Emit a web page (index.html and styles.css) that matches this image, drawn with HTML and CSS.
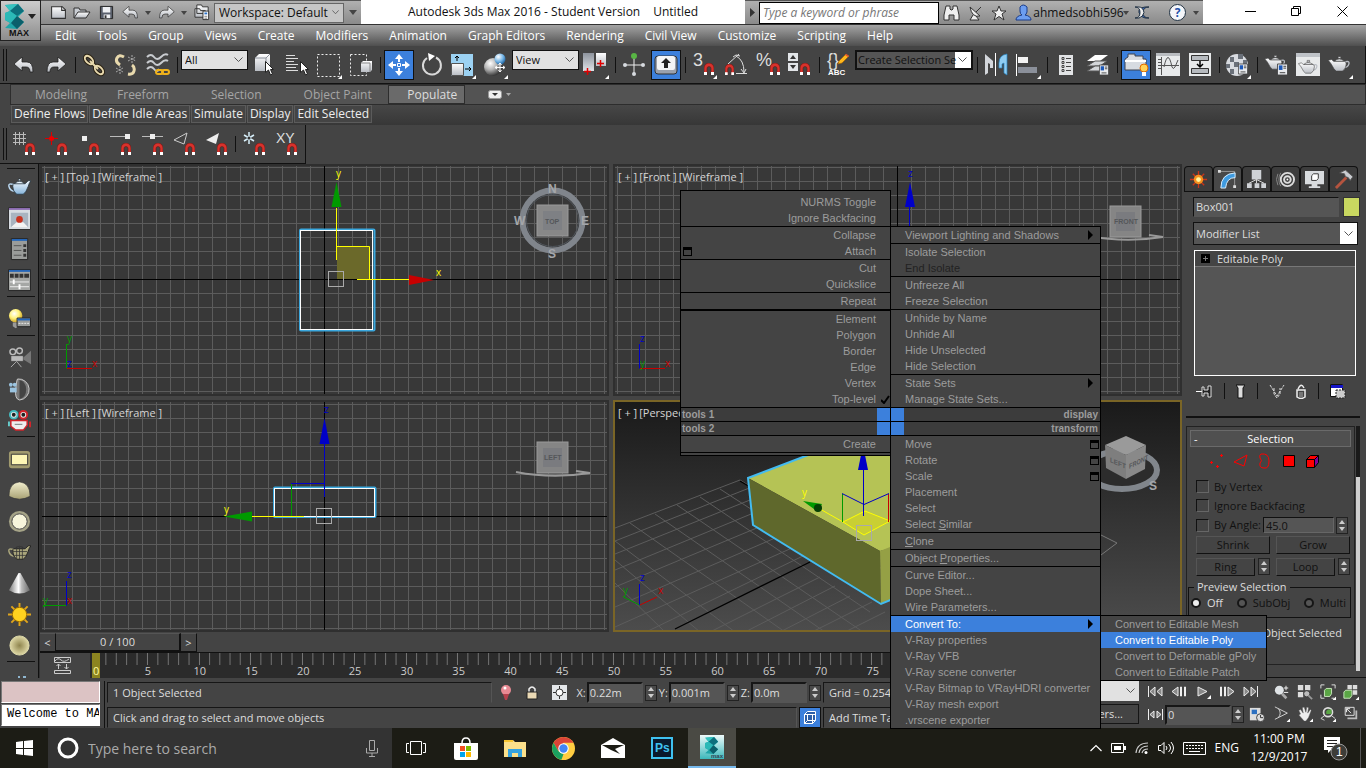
FILE: index.html
```html
<!DOCTYPE html>
<html lang="en">
<head>
<meta charset="utf-8">
<title>Autodesk 3ds Max 2016 - Student Version Untitled</title>
<link rel="stylesheet" href="styles.css">
</head>
<body>
<svg class="sprite" aria-hidden="true">
<defs>
<linearGradient id="gw" x1="0" y1="0" x2="0" y2="1"><stop offset="0" stop-color="#fff"/><stop offset="1" stop-color="#b9bdc4"/></linearGradient>
<linearGradient id="gs" x1="0" y1="0" x2="0" y2="1"><stop offset="0" stop-color="#8e949e"/><stop offset="1" stop-color="#dfe2e6"/></linearGradient>
<radialGradient id="gball" cx=".35" cy=".3" r=".7"><stop offset="0" stop-color="#fff"/><stop offset=".5" stop-color="#b5b5b5"/><stop offset="1" stop-color="#3a3a3a"/></radialGradient>
<radialGradient id="gblue" cx=".35" cy=".3" r=".7"><stop offset="0" stop-color="#fff"/><stop offset=".6" stop-color="#79b8e8"/><stop offset="1" stop-color="#2a6ea8"/></radialGradient>
<radialGradient id="gyel" cx=".4" cy=".35" r=".7"><stop offset="0" stop-color="#fff"/><stop offset=".5" stop-color="#fff27a"/><stop offset="1" stop-color="#c99a1b"/></radialGradient>
<radialGradient id="gcream" cx=".5" cy=".5" r=".6"><stop offset="0" stop-color="#8f854e"/><stop offset="1" stop-color="#efe9b8"/></radialGradient>
<linearGradient id="gdome" x1="0" y1="0" x2="0" y2="1"><stop offset="0" stop-color="#f3efcf"/><stop offset="1" stop-color="#a8a274"/></linearGradient>
<linearGradient id="gcone" x1="0" y1="0" x2="1" y2="0"><stop offset="0" stop-color="#777"/><stop offset=".45" stop-color="#fff"/><stop offset=".6" stop-color="#bbb"/><stop offset="1" stop-color="#666"/></linearGradient>
<linearGradient id="gpersp" x1="0" y1="0" x2="0" y2="1"><stop offset="0" stop-color="#1a1a1a"/><stop offset="1" stop-color="#4c4c4c"/></linearGradient>
<linearGradient id="gteal" x1="0" y1="0" x2="0" y2="1"><stop offset="0" stop-color="#eefafa"/><stop offset="1" stop-color="#3cb8bb"/></linearGradient>
<linearGradient id="gpot" x1="0" y1="0" x2="0" y2="1"><stop offset="0" stop-color="#f2f9ff"/><stop offset="1" stop-color="#86b4da"/></linearGradient>
<pattern id="gridTop" width="14" height="14" x="324" y="279" patternUnits="userSpaceOnUse"><path d="M0 .5H14M.5 0V14" stroke="#5c5c5c"/></pattern>
<pattern id="gridFront" width="14" height="14" x="897" y="279" patternUnits="userSpaceOnUse"><path d="M0 .5H14M.5 0V14" stroke="#5c5c5c"/></pattern>
<pattern id="gridLeft" width="14" height="14" x="324" y="516" patternUnits="userSpaceOnUse"><path d="M0 .5H14M.5 0V14" stroke="#5c5c5c"/></pattern>
</defs>
<symbol id="mag" viewBox="0 0 10 12"><path d="M0 12V5a5 5 0 0 1 10 0v7H7V5.500a2 2 0 0 0-4 0V12z" fill="#d8322c" stroke="#6d1512" stroke-width=".6"/><path d="M0 9h3v3H0zM7 9h3v3H7z" fill="#fff"/></symbol>
<symbol id="maxlogo" viewBox="0 0 20 25"><path d="M0 1 13 0l6 7-6 6 6 5-7 7-12-1 5-5-5-3V9l5-2z" fill="#1fa5a8"/><path d="M0 1 13 0 5 7z" fill="#35c3c0"/><path d="m13 0 6 7-7 5-7-5z" fill="#0d6f7c"/><path d="m0 9 5-2 7 5-6 7-6-3z" fill="#2bb9b7"/><path d="m6 19 6-7 7 6-7 7z" fill="#0b5f6b"/></symbol>
<symbol id="new" viewBox="0 0 16 16"><path d="M1.500 2.500h10l3 3v8h-13z" fill="url(#gw)" stroke="#333"/><path d="M11 2v4h4" fill="none" stroke="#333"/></symbol>
<symbol id="open" viewBox="0 0 18 16"><path d="M1 13V3h5l1 2h6v2" fill="#c9cdd3" stroke="#333"/><path d="m1 13 4-6h12l-4 6z" fill="url(#gw)" stroke="#333"/></symbol>
<symbol id="save" viewBox="0 0 16 16"><path d="M1.500 1.500h13v13h-13z" fill="#5a606c" stroke="#222"/><path d="M4 2h8v6H4zM5 10h7v4H5z" fill="#eef0f3"/><path d="M6 11h2v3H6z" fill="#333"/></symbol>
<symbol id="undo" viewBox="0 0 22 18"><path d="M9 1v5h5q6 0 6 10h-3q0-5-4-5H9v4L1 8z" fill="url(#gw)" stroke="#222" stroke-width=".8"/></symbol>
<symbol id="redo" viewBox="0 0 22 18"><path d="M13 1v5H8q-6 0-6 10h3q0-5 4-5h4v4l8-7z" fill="url(#gw)" stroke="#222" stroke-width=".8"/></symbol>
<symbol id="proj" viewBox="0 0 18 18"><path d="M3 1h5l1 2h6v7H3zM1 5h5l1 2h5v7H1z" fill="url(#gw)" stroke="#333"/><path d="M9.500 7.500h6v9h-6z" fill="#fff" stroke="#333"/><path d="M11 9h3v2h-3z" fill="#2f74c8"/><path d="M11 13h3m-3 2h3" stroke="#777"/></symbol>
<symbol id="link" viewBox="0 0 24 24"><g fill="none" stroke="#2c2416" stroke-width="4"><ellipse cx="7" cy="7" rx="3" ry="5" transform="rotate(-45 7 7)"/><ellipse cx="17" cy="17" rx="3" ry="5" transform="rotate(-45 17 17)"/><path d="m8 8 8 8"/></g><g fill="none" stroke="#e8d9ad" stroke-width="2"><ellipse cx="7" cy="7" rx="3" ry="5" transform="rotate(-45 7 7)"/><ellipse cx="17" cy="17" rx="3" ry="5" transform="rotate(-45 17 17)"/><path d="m8 8 8 8"/></g></symbol>
<symbol id="unlink" viewBox="0 0 24 24"><path d="M10 4Q5 1 3 5t3 7M14 21q5 1 6-3t-2-6" fill="none" stroke="#e8d9ad" stroke-width="3"/><path d="m14 4 8 4m-8 0 8-4m-4-2v8M2 15l7 4m-7 0 7-4m-3-2v8" stroke="#aaa" stroke-dasharray="2 1"/></symbol>
<symbol id="bind" viewBox="0 0 24 24"><path d="M1 4q4-4 7 0t7 0 7-2M1 10q4-4 7 0t7 0 7-2M1 16q4-4 7 0t5 0" fill="none" stroke="#c9ccd0" stroke-width="2"/><rect x="10" y="17" width="7" height="4" rx="2" fill="none" stroke="#f0b21b" stroke-width="2"/><rect x="16" y="17" width="7" height="4" rx="2" fill="none" stroke="#f0b21b" stroke-width="2"/></symbol>
<symbol id="cursor" viewBox="0 0 9 15"><path d="M.5.5v11l3-2.500 2 5 2-1-2-4.500h3z" fill="#fff" stroke="#222"/></symbol>
<symbol id="selobj" viewBox="0 0 24 24"><path d="m2 5 4-4h11v12l-4 5H2z" fill="url(#gw)"/><path d="M2 5h11v13M13 5l4-4" stroke="#8a909a" fill="none"/><use href="#cursor" x="12" y="8" width="9" height="15"/></symbol>
<symbol id="selname" viewBox="0 0 24 24"><path d="M1 2.500h9m-9 3h12m-12 3h8m-8 3h12m-12 3h10m-10 3h12" stroke="#ddd"/><use href="#cursor" x="15" y="8" width="9" height="15"/></symbol>
<symbol id="fly" viewBox="0 0 5 5"><path d="M5 0v5H0z" fill="#fff"/></symbol>
<symbol id="region" viewBox="0 0 26 26"><path d="M1.500 1.500h22v22h-22z" fill="none" stroke="#eee" stroke-dasharray="2 2"/><use href="#fly" x="22" y="22" width="4" height="4"/></symbol>
<symbol id="cross" viewBox="0 0 24 24"><path d="M1.500 1.500h16v21h-16z" fill="none" stroke="#eee" stroke-dasharray="2 2"/><path d="m12 10 2-2h9v9l-2 2h-9z" fill="url(#gw)"/><path d="M12 10h9v9" fill="none" stroke="#888"/></symbol>
<symbol id="move" viewBox="0 0 24 24"><path d="m12 1 4 5h-3v3h-2V6H8zM12 23l4-5h-3v-3h-2v3H8zM1 12l5-4v3h3v2H6v3zM23 12l-5-4v3h-3v2h3v3z" fill="#fff"/><path d="M10.500 10.500h3v3h-3z" fill="none" stroke="#fff"/></symbol>
<symbol id="rotate" viewBox="0 0 24 24"><path d="M8 5a9 9 0 1 0 9-.5" fill="none" stroke="#d9d9d9" stroke-width="2"/><path d="m9 0 7 3-6 5z" fill="#fff"/></symbol>
<symbol id="scale" viewBox="0 0 26 26"><path d="M1 1h22v22H1z" fill="#9cd2f3"/><path d="M1.500 10.500h12v12h-12z" fill="url(#gw)" stroke="#555"/><path d="M7 8V3M5 5l2-2 2 2M15 16h6m-2-2 2 2-2 2" stroke="#000" fill="none"/><use href="#fly" x="22" y="22" width="4" height="4"/></symbol>
<symbol id="place" viewBox="0 0 26 26"><circle cx="11" cy="14" r="9" fill="url(#gball)"/><circle cx="18" cy="6" r="5.500" fill="url(#gblue)"/><path d="M18 10v9m-4.500-4.500h9M16.500 12l1.500-2 1.500 2m-3 5 1.500 2 1.500-2M15 13l-2 1.500 2 1.500m6-3 2 1.500-2 1.500" stroke="#fff" fill="none"/><use href="#fly" x="22" y="22" width="4" height="4"/></symbol>
<symbol id="pivot" viewBox="0 0 26 26"><path d="M0 0h11v18H0z" fill="url(#gs)"/><path d="M13 0h10v13H13z" fill="url(#gw)"/><path d="M4.500 15v7M1 18.500h7M17.500 7v7M14 10.500h7" stroke="#e00000" stroke-width="1.500"/><use href="#fly" x="22" y="22" width="4" height="4"/></symbol>
<symbol id="manip" viewBox="0 0 24 24"><path d="M12 3v17M2 12h20" stroke="#eee"/><circle cx="12" cy="3" r="3" fill="#58b544"/><circle cx="12" cy="21" r="2" fill="#d7dbe0"/><circle cx="3" cy="12" r="2" fill="#d7dbe0"/><circle cx="21" cy="12" r="2" fill="#d7dbe0"/></symbol>
<symbol id="kbd" viewBox="0 0 24 24"><rect x="1" y="3" width="22" height="18" rx="3" fill="#9aa1ad" stroke="#333"/><rect x="3" y="3" width="18" height="14" rx="2" fill="#f4f5f6"/><path d="m12 5 5 5h-3v5h-4v-5H7z" fill="#222"/></symbol>
<symbol id="angle" viewBox="0 0 24 24"><path d="M12 20.500h11M4 11 15 1m-3 2q8 4 8 16M17 16l3 4 2-4M9 4l3-2 4 1" stroke="#ddd" fill="none"/><use href="#mag" x="1" y="11" width="9" height="11"/></symbol>
<symbol id="spin" viewBox="0 0 24 24"><path d="M0 0h10v8H0zM0 10h10v8H0z" fill="#e2e5e8"/><path d="m2 6 3-4 3 4zM2 12l3 4 3-4z" fill="#333"/><use href="#mag" x="12" y="10" width="10" height="12"/></symbol>
<symbol id="pencil" viewBox="0 0 12 12"><path d="m2 8 7-7 3 2-7 7-4 1z" fill="#ffb81c" stroke="#a35c00" stroke-width=".6"/><path d="m9 1 3 2-1 1-3-2z" fill="#e04a3a"/></symbol>
<symbol id="mirror" viewBox="0 0 24 24"><path d="m1 1 8 7v7H6v-4l-2-1v10l-3 2z" fill="#d3d6db"/><path d="M23 1q-8 1-8 9v5h3v-4l2-1v10l3 2z" fill="#8fcdf3" stroke="#2a86c4" stroke-width=".7"/><path d="M11.500 0v23" stroke="#fff"/></symbol>
<symbol id="align" viewBox="0 0 26 26"><path d="M1.500 1v22" stroke="#fff"/><path d="M3 4h10v6H3z" fill="#f3f3f3"/><path d="M3 14h19v6H3z" fill="#8b909a"/><use href="#fly" x="22" y="22" width="4" height="4"/></symbol>
<symbol id="scene" viewBox="0 0 24 24"><path d="M5 2h14v20H5z" fill="#e2e4e6"/><g stroke="#444"><path d="M12 5.500h5m-5 4h5m-5 4h5m-5 4h5"/><path d="M8 4.500h2v2H8zm0 4h2v2H8zm0 4h2v2H8zm0 4h2v2H8z" fill="none"/></g></symbol>
<symbol id="card" viewBox="0 0 12 13"><path d="M.5.500h11v12H.5z" fill="#e9ebee" stroke="#444"/><path d="M2 2h4v5H2z" fill="#1c58b8"/><path d="M7 3h3M7 5h3M3 10h6" stroke="#333"/></symbol>
<symbol id="layers" viewBox="0 0 24 24"><path d="m1 8 8-6h13l-8 6z" fill="#fff"/><path d="m1 13 8-5h12l-7 5z" fill="#d3d6d9" stroke="#555"/><path d="m1 18 8-5h11l-6 5z" fill="#d3d6d9" stroke="#555"/><use href="#card" x="13" y="11" width="10" height="12"/></symbol>
<symbol id="rib" viewBox="0 0 26 26"><path d="M5 4V1h7v2h8v3h3v11H2V6z" fill="#d7dbe1" stroke="#3c4350"/><path d="M2 8h21" stroke="#fff" stroke-width="2"/><circle cx="21" cy="15" r="4" fill="#ffd257" stroke="#e06a00"/><path d="M19 19h4v4h-4z" fill="#fff"/></symbol>
<symbol id="curve" viewBox="0 0 24 24"><path d="M0 0h24v23H0z" fill="#e8eaeb"/><path d="M0 0h24v3H0z" fill="#b9bcc0"/><path d="M5.500 4v18M2 6.500h3m-3 3h3m-3 3h3m-3 3h3M6 12.500h17M8 14q4-19 8 0 1 3 3 0l3-7" stroke="#555" fill="none"/></symbol>
<symbol id="schem" viewBox="0 0 24 24"><path d="M1 0h22v23H1z" fill="#e8eaeb"/><path d="M3.500 2.500h17v5h-17zM3.500 15.500h17v5h-17z" fill="#b6babf" stroke="#333"/><path d="M12 8v6m-3-3 3 3 3-3" stroke="#000" fill="none" stroke-width="1.500"/></symbol>
<symbol id="mat" viewBox="0 0 26 26"><circle cx="12" cy="12" r="11" fill="#d8dbe0"/><path d="M5 4h4v5H5zM13 1h5v5h-5zM9 9h5v5H9zM1 11h4v4H1zM18 7h4v4h-4zM5 16h4v5H5z" fill="#6a7079"/><use href="#card" x="13" y="10" width="10" height="12"/><use href="#fly" x="22" y="22" width="4" height="4"/></symbol>
<symbol id="pot" viewBox="0 0 24 20"><path d="M18 9q6-2 5 2-1 4-5 4" fill="none" stroke="#b9bdc4" stroke-width="1.500"/><path d="M7 8h11q2 0 2 3 0 5-4 8H9q-3-2-4-5Q3 10 0 7l4-1q2 3 3 2z" fill="url(#gw)" stroke="#444" stroke-width=".7"/><path d="M7 8q5-5 11 0zM11 3h3v2h-3z" fill="#e6e8eb" stroke="#444" stroke-width=".7"/></symbol>
<symbol id="rset" viewBox="0 0 24 24"><use href="#pot" x="0" y="0" width="22" height="17"/><use href="#card" x="13" y="10" width="11" height="13"/></symbol>
<symbol id="rframe" viewBox="0 0 24 24"><path d="M0 0h24v23H0z" fill="#e8eaeb"/><path d="M0 0h24v4H0z" fill="#bfc3c8"/><use href="#pot" x="2" y="5" width="20" height="16"/></symbol>
<symbol id="rprod" viewBox="0 0 26 26"><use href="#pot" x="1" y="1" width="22" height="18"/><use href="#fly" x="22" y="22" width="4" height="4"/></symbol>
<symbol id="s1" viewBox="0 0 24 24"><path d="M1 2.500h13m-13 4h13m-13 4h13M3.500 0v13M7.500 0v13M11.500 0v13" stroke="#bbb"/><use href="#mag" x="13" y="11" width="10" height="12"/></symbol>
<symbol id="s2" viewBox="0 0 24 24"><path d="M7.500 0v13M1 6.500h13" stroke="#d00"/><circle cx="7.500" cy="6.500" r="2.500" fill="#e00"/><use href="#mag" x="13" y="11" width="10" height="12"/></symbol>
<symbol id="s3" viewBox="0 0 24 24"><path d="M6 4h5v5H6z" fill="#eee"/><use href="#mag" x="13" y="11" width="10" height="12"/></symbol>
<symbol id="s4" viewBox="0 0 24 24"><path d="M2 4.500h17" stroke="#bbb"/><path d="M17 2h5v5h-5z" fill="#eee"/><use href="#mag" x="13" y="11" width="10" height="12"/></symbol>
<symbol id="s5" viewBox="0 0 24 24"><path d="M2 4.500h21" stroke="#bbb"/><path d="M10 2h5v5h-5z" fill="#eee"/><use href="#mag" x="13" y="11" width="10" height="12"/></symbol>
<symbol id="s6" viewBox="0 0 24 24"><path d="M15 1 2 8l10 4z" fill="none" stroke="#ccc"/><use href="#mag" x="13" y="11" width="10" height="12"/></symbol>
<symbol id="s7" viewBox="0 0 24 24"><path d="M15 1 2 8l10 4z" fill="#eee"/><use href="#mag" x="13" y="11" width="10" height="12"/></symbol>
<symbol id="s8" viewBox="0 0 24 24"><path d="M7 0v12M2 3l10 6M12 3 2 9" stroke="#d7effa" stroke-width="1.500"/><circle cx="7" cy="6" r="1.500" fill="#333"/><use href="#mag" x="13" y="11" width="10" height="12"/></symbol>
<symbol id="bpot" viewBox="0 0 24 24"><path d="M6 9q-6-2-5 2 1 4 5 5" fill="none" stroke="#b9d7f0" stroke-width="1.500"/><path d="M6 8h12l3-3 3 0q-2 2-3 6-2 6-5 8H9q-4-3-4-8 0-3 1-3z" fill="url(#gpot)" stroke="#23333f" stroke-width=".8"/><path d="M7 8q5-5 10 0zM11 3h2v2h-2z" fill="#e9f4fc" stroke="#23333f" stroke-width=".6"/></symbol>
<symbol id="vfb" viewBox="0 0 24 24"><path d="M.5.500h23v23H.5z" fill="#d8dde2" stroke="#2a2a2a"/><path d="M1 1h22v2H1z" fill="#8b6bb0"/><path d="M3 6h18v15H3z" fill="#a9b4c0"/><path d="m3 21 6-5h7l5 5z" fill="#f3f3f3"/><circle cx="12" cy="13" r="3.500" fill="#c9331f"/></symbol>
<symbol id="list" viewBox="0 0 24 24"><path d="M3.500.500h17v22h-17z" fill="#9a9c9a" stroke="#222"/><path d="M4 1h16v2H4z" fill="#2566b8"/><path d="M6 8h8m-8 5h8m-8 5h8" stroke="#555"/><path d="M16 8h3m-3 5h3m-3 5h3" stroke="#333" stroke-width="3"/></symbol>
<symbol id="mixer" viewBox="0 0 24 24"><path d="M.5.500h23v22H.5z" fill="#a5a7a5" stroke="#222"/><path d="M1 1h22v2H1z" fill="#2566b8"/><path d="M2 5h4v4H2zm5 0h4v4H7zm5 0h4v4h-4zm5 0h5v4h-5z" fill="#333"/><path d="M2 13.500h20m-20 5h20" stroke="#eee"/><path d="M6 11v5m6 0v5" stroke="#fff" stroke-width="2"/></symbol>
<symbol id="bulb" viewBox="0 0 24 24"><circle cx="8" cy="8" r="7" fill="url(#gyel)"/><path d="M5 15h6v4l-3 2-3-2z" fill="#999"/><path d="M9.500 10.500h14v9h-14z" fill="#9a9c9a" stroke="#222"/><path d="M10 11h13v2H10z" fill="#2566b8"/><path d="M11 16h11" stroke="#eee" stroke-dasharray="2 1"/></symbol>
<symbol id="cam" viewBox="0 0 24 24"><circle cx="5" cy="5" r="3" fill="none" stroke="#bbb" stroke-width="1.500"/><circle cx="12" cy="4" r="3" fill="none" stroke="#bbb" stroke-width="1.500"/><path d="M3 9h13v6H3z" fill="#bbb" stroke="#333" stroke-width=".6"/><path d="m16 11 8-7v14l-8-5z" fill="#777"/><path d="m9 15-6 6m6-6 5 6" stroke="#aaa"/></symbol>
<symbol id="domecam" viewBox="0 0 24 24"><path d="M10 1a11 11 0 1 1 2 22q-5-1-4-11T10 1z" fill="#777" stroke="#ccc"/><path d="M12 2q7 2 7 10t-7 10z" fill="#444"/><circle cx="3" cy="7" r="2" fill="#9bc4e0"/><circle cx="7" cy="7" r="2" fill="#9bc4e0"/><path d="M2 10h7v5H2z" fill="#9bc4e0"/></symbol>
<symbol id="redcam" viewBox="0 0 24 24"><circle cx="6" cy="6" r="4" fill="#e8e8e8" stroke="#43b8bd" stroke-width="2"/><circle cx="16" cy="6" r="4" fill="#e8e8e8" stroke="#d2232a" stroke-width="2"/><circle cx="6" cy="6" r="2" fill="#222"/><circle cx="16" cy="6" r="2" fill="#222"/><path d="M3 12h17v5l-4 5H8l-5-4z" fill="#eee" stroke="#d2232a" stroke-width="1.500"/><path d="M1 13v5" stroke="#6cc" stroke-width="2"/><path d="M23 13v6" stroke="#d2232a" stroke-width="2"/><path d="M7 16h8" stroke="#777"/></symbol>
<symbol id="l1" viewBox="0 0 24 24"><rect x="1" y="3" width="22" height="18" rx="3" fill="#a09a6e"/><path d="M3.500 6.500h17v11h-17z" fill="#fdf7b5" stroke="#333"/></symbol>
<symbol id="l2" viewBox="0 0 24 24"><path d="M1 18Q1 4 12 3q11 1 11 15-11 6-22 0z" fill="url(#gdome)" stroke="#333" stroke-width=".6"/></symbol>
<symbol id="l3" viewBox="0 0 24 24"><circle cx="12" cy="12" r="11" fill="#a5a387"/><circle cx="12" cy="12" r="8" fill="#f7f5db" stroke="#444"/></symbol>
<symbol id="l4" viewBox="0 0 24 24"><path d="M6 9q-6-2-5 2 1 4 5 5" fill="none" stroke="#aaa67c" stroke-width="1.500"/><path d="M6 8h12l3-3 3 0q-2 2-3 6-2 6-5 8H9q-4-3-4-8 0-3 1-3z" fill="#aaa67c" stroke="#222"/><path d="M7 8q5-5 10 0zM9 6v13m3-13v13m3-13v13M5 11h15M6 15h13" stroke="#333" stroke-width=".8" fill="none"/></symbol>
<symbol id="l5" viewBox="0 0 24 24"><path d="m11 1 2 0 10 18q-11 7-22 0z" fill="url(#gcone)"/></symbol>
<symbol id="l6" viewBox="0 0 24 24"><path d="M12 0v24M0 12h24M3.500 3.500l17 17M20.500 3.500l-17 17" stroke="#e0a51c" stroke-width="2"/><circle cx="12" cy="12" r="7.500" fill="#ffd21f" stroke="#9a6a00"/></symbol>
<symbol id="l7" viewBox="0 0 24 24"><circle cx="12" cy="12" r="10" fill="url(#gcream)" stroke="#dcd8a8"/></symbol>
<symbol id="tcreate" viewBox="0 0 20 20"><path d="M10 1v18M1 10h18M4 4l12 12M16 4 4 16" stroke="#c9331a" stroke-width="1.400"/><circle cx="10" cy="10" r="5" fill="#f5901e"/><circle cx="10" cy="10" r="2.500" fill="#fff6a0"/></symbol>
<symbol id="tmod" viewBox="0 0 20 20"><path d="M1.500 1.500h16v16" fill="none" stroke="#999"/><path d="M3 19Q3 4 18 3v5Q9 8 8 19z" fill="#3f9be0" stroke="#dff1ff"/><path d="M0 0h3v3H0zM16 16h3v3h-3z" fill="#ddd"/></symbol>
<symbol id="thier" viewBox="0 0 20 20"><path d="M5 0h10v10H5zM0 14h5v5H0zm8 0h5v5H8zm7 0h5v5h-5z" fill="#cfd2d6"/><path d="m10 10-8 4m8-4v4m0-4 8 4" stroke="#ddd"/></symbol>
<symbol id="tmot" viewBox="0 0 20 20"><g fill="none" stroke="#ddd"><circle cx="12" cy="10" r="7" stroke-width="2"/><circle cx="12" cy="10" r="3.500" stroke-width="2"/><path d="M5 3q-4 7 0 14M2 4q-3 6 0 12" stroke="#888"/></g><circle cx="12" cy="10" r="1" fill="#fff"/></symbol>
<symbol id="tdisp" viewBox="0 0 20 20"><path d="M0 1h20v14H0zM7 15h6v2h3v2H4v-2h3z" fill="#d9dcdf"/><path d="m7 6 2-2h5v5l-2 2H7z" fill="#fff" stroke="#333"/></symbol>
<symbol id="tutil" viewBox="0 0 20 20"><path d="M2 19 13 8" stroke="#b5543f" stroke-width="3"/><path d="m6 3 6-3 8 7-3 4-2-3-3-1-1-3z" fill="#c9ccd0" stroke="#555"/></symbol>
<symbol id="cube" viewBox="0 0 16 16"><path d="M2.500 4.500l3-3h8v9l-3 3h-8z" fill="#2d5fa8" stroke="#fff"/><path d="M5.500 4.500h8M5.500 4.500v6l-3 3M5.500 10.500h8M10.500 4.500v9" fill="none" stroke="#fff"/><path d="M2.500 4.500h8v9h-8z" fill="none" stroke="#fff"/></symbol>
<symbol id="nav1" viewBox="0 0 18 18"><circle cx="6" cy="7" r="5" fill="#dfe3e6"/><path d="m9 11 5 5" stroke="#aaa" stroke-width="3"/><path d="M11 4.500h5M13.500 2v5M11 9.500h5" stroke="#fff"/></symbol>
<symbol id="nav2" viewBox="0 0 18 18"><path d="M1 1h6v6H1zm8 0h6v6H9zM1 9h6v6H1z" fill="#ddd"/><circle cx="11" cy="11" r="3.500" fill="#bbb" stroke="#333"/><path d="m13 13 4 4" stroke="#999" stroke-width="2"/></symbol>
<symbol id="nav3" viewBox="0 0 18 18"><path d="M1 5V1h4m8 0h4v4M1 12v4h4m8 0h3" fill="none" stroke="#eee"/><path d="m5 7 2-2h6v6l-2 3H5z" fill="#5aa545" stroke="#d3efc5"/><use href="#fly" x="14" y="14" width="4" height="4"/></symbol>
<symbol id="nav4" viewBox="0 0 18 18"><path d="M5 1h5v5H5zm6 0h5v5h-5zm0 6h5v5h-5z" fill="#ddd"/><path d="m1 9 2-2h7v6l-2 3H1z" fill="#5aa545" stroke="#d3efc5"/><use href="#fly" x="14" y="14" width="4" height="4"/></symbol>
<symbol id="nav5" viewBox="0 0 18 18"><path d="M1 1h12v14H1z" fill="#ddd"/><path d="M3 3h6v5H3z" fill="#2b6fc0"/><circle cx="13" cy="12" r="4.500" fill="#ddd" stroke="#333"/><path d="M13 9v3h3" fill="none" stroke="#222"/></symbol>
<symbol id="nav6" viewBox="0 0 18 18"><path d="m1 1 14 7L1 15M5 3q4 5 0 10" fill="none" stroke="#ddd"/><use href="#fly" x="14" y="14" width="4" height="4"/></symbol>
<symbol id="hand" viewBox="0 0 18 18"><path d="M4 9 2 5l2-1 3 4L6 2l2-1 2 6 1-6 2 1-1 6 3-4 1 1-3 8-3 4H8l-6-7z" fill="#eee" stroke="#555" stroke-width=".5"/><use href="#fly" x="14" y="14" width="4" height="4"/></symbol>
<symbol id="orbit" viewBox="0 0 18 18"><circle cx="9" cy="7" r="5" fill="none" stroke="#ddd" stroke-width="2"/><path d="m7 6 2-2h4v5H7z" fill="#5aa545"/><path d="m5 11-4 3 4 2m8-5 4 3" fill="none" stroke="#ddd"/><use href="#fly" x="14" y="14" width="4" height="4"/></symbol>
<symbol id="maxim" viewBox="0 0 18 18"><path d="M2.500 1.500h10v9h-10z" fill="#444" stroke="#eee"/><path d="m4 3 5 5M4 7V3h4" stroke="#fff" fill="none"/><path d="M5 13h9V5h2v10H5z" fill="#bbb"/></symbol>
</svg>

<div class="app">
<header class="titlebar">
  <div class="qat">
    <button class="ib" aria-label="New"><svg width="17" height="17"><use href="#new"/></svg></button>
    <button class="ib" aria-label="Open"><svg width="18" height="16"><use href="#open"/></svg></button>
    <button class="ib" aria-label="Save"><svg width="15" height="15"><use href="#save"/></svg></button>
    <button class="ib" aria-label="Undo"><svg width="17" height="15"><use href="#undo"/></svg></button>
    <button class="car" aria-label="Undo list"></button>
    <button class="ib" aria-label="Redo"><svg width="17" height="15"><use href="#redo"/></svg></button>
    <button class="car" aria-label="Redo list"></button>
    <button class="ib" aria-label="Project folder"><svg width="17" height="17"><use href="#proj"/></svg></button>
    <select class="workspace" aria-label="Workspace"><option>Workspace: Default</option></select>
    <button class="car wide" aria-label="Customize toolbar"></button>
  </div>
  <h1><span>Autodesk 3ds Max 2016 - Student Version</span><span>Untitled</span></h1>
  <div class="info">
    <button class="expand" aria-label="Collapse search"><svg width="5" height="9"><path d="M0 0v9l5-4.500z" fill="#333"/></svg></button>
    <input type="search" placeholder="Type a keyword or phrase" aria-label="Search help">
    <button class="ib" aria-label="Search"><svg width="17" height="16" viewBox="0 0 17 16"><path d="M3 1h4v3l1 1h1l1-1V1h4l2 9v5h-5v-5H6v5H1v-5z" fill="#eee" stroke="#333"/></svg></button>
    <button class="ib" aria-label="Communication"><svg width="15" height="16" viewBox="0 0 15 16"><path d="m2 2 10 9q-8 2-10-9zM5 10l-3 5h9l-3-4M8 7l5-5" fill="#eee" stroke="#333"/></svg></button>
    <button class="ib" aria-label="Favorites"><svg width="16" height="16" viewBox="0 0 16 16"><path d="m8 1 2 5h5l-4 3 2 6-5-3.500L3 15l2-6-4-3h5z" fill="#eee" stroke="#333"/></svg></button>
    <button class="ib" aria-label="Account"><svg width="17" height="17" viewBox="0 0 17 17"><path d="M5 3q3-4 7 0v5q-1 3-2 3 6 1 6 5H1q0-4 6-5-2-1-2-4z" fill="#6c9df0" stroke="#1a3c8a"/></svg></button>
    <button class="user">ahmedsobhi596</button><button class="car slim" aria-label="Account menu"></button>
    <button class="ib" aria-label="Exchange"><svg width="16" height="13" viewBox="0 0 16 13"><path d="M15 1q-6 0-6 5.500t6 5.500h-4Q6 11 5 6.500T11 1z" fill="#3a68c0" stroke="#234"/><path d="M1 1q5 0 5 5.500T1 12h4q4-1 5-5.500Q9 1 5 1z" fill="#eee" stroke="#234"/></svg></button>
    <button class="help" aria-label="Help">?</button><button class="car" aria-label="Help menu"></button>
  </div>
  <div class="win">
    <button aria-label="Minimize"><svg width="11" height="11"><path d="M0 5.500h11" stroke="#000"/></svg></button>
    <button aria-label="Restore"><svg width="11" height="11"><path d="M.5 2.500h7v7h-7zM2.500 2V.500h7v7H8" fill="none" stroke="#000"/></svg></button>
    <button aria-label="Close"><svg width="11" height="11"><path d="m.5.500 10 10m0-10-10 10" stroke="#000"/></svg></button>
  </div>
</header>
<button class="appbtn" aria-label="Application menu"><svg width="20" height="25"><use href="#maxlogo"/></svg><i class="tri"></i><span>MAX</span></button>
<nav class="menubar"><button>Edit</button><button>Tools</button><button>Group</button><button>Views</button><button>Create</button><button>Modifiers</button><button>Animation</button><button>Graph Editors</button><button>Rendering</button><button>Civil View</button><button>Customize</button><button>Scripting</button><button>Help</button></nav>

<div class="toolbar">
  <button aria-label="Undo"><svg class="arrow"><use href="#undo"/></svg></button>
  <button aria-label="Redo"><svg class="arrow"><use href="#redo"/></svg></button><i></i>
  <button aria-label="Link"><svg><use href="#link"/></svg></button>
  <button aria-label="Unlink"><svg><use href="#unlink"/></svg></button>
  <button aria-label="Bind to space warp"><svg><use href="#bind"/></svg></button><i></i>
  <select class="filter" aria-label="Selection filter"><option>All</option></select>
  <button aria-label="Select object"><svg><use href="#selobj"/></svg></button>
  <button aria-label="Select by name"><svg><use href="#selname"/></svg></button>
  <button aria-label="Region"><svg class="big"><use href="#region"/></svg></button>
  <button aria-label="Crossing"><svg><use href="#cross"/></svg></button><i></i>
  <button class="on" aria-label="Move"><svg><use href="#move"/></svg></button>
  <button aria-label="Rotate"><svg><use href="#rotate"/></svg></button>
  <button aria-label="Scale"><svg class="big"><use href="#scale"/></svg></button>
  <button aria-label="Place"><svg class="big"><use href="#place"/></svg></button>
  <select class="coord" aria-label="Reference coordinate system"><option>View</option></select>
  <button aria-label="Pivot center"><svg class="big"><use href="#pivot"/></svg></button><i></i>
  <button aria-label="Manipulate"><svg><use href="#manip"/></svg></button>
  <button class="on" aria-label="Keyboard override"><svg><use href="#kbd"/></svg></button><i></i>
  <button aria-label="Snaps"><svg class="big" viewBox="0 0 26 26"><text x="2" y="13" class="ict">3</text><use href="#mag" x="13" y="10" width="10" height="12"/><use href="#fly" x="22" y="22" width="4" height="4"/></svg></button>
  <button aria-label="Angle snap"><svg><use href="#angle"/></svg></button>
  <button aria-label="Percent snap"><svg viewBox="0 0 24 24"><text x="0" y="13" class="ict">%</text><use href="#mag" x="14" y="10" width="10" height="12"/></svg></button>
  <button aria-label="Spinner snap"><svg><use href="#spin"/></svg></button><i></i>
  <button aria-label="Edit named selections"><svg viewBox="0 0 24 24"><text x="1" y="13" class="ict">{}</text><text x="2" y="22" class="abc">ABC</text><use href="#pencil" x="11" y="0" width="12" height="12"/></svg></button>
  <select class="named" aria-label="Named selection sets"><option>Create Selection Se</option></select><i></i>
  <button aria-label="Mirror"><svg><use href="#mirror"/></svg></button>
  <button aria-label="Align"><svg class="big"><use href="#align"/></svg></button><i></i>
  <button aria-label="Scene explorer"><svg><use href="#scene"/></svg></button>
  <button aria-label="Layers"><svg><use href="#layers"/></svg></button><i></i>
  <button class="on" aria-label="Toggle ribbon"><svg class="big"><use href="#rib"/></svg></button>
  <button aria-label="Curve editor"><svg><use href="#curve"/></svg></button>
  <button aria-label="Schematic view"><svg><use href="#schem"/></svg></button><i></i>
  <button aria-label="Material editor"><svg class="big"><use href="#mat"/></svg></button><i></i>
  <button aria-label="Render setup"><svg><use href="#rset"/></svg></button>
  <button aria-label="Rendered frame"><svg><use href="#rframe"/></svg></button>
  <button aria-label="Render"><svg class="big"><use href="#rprod"/></svg></button>
</div>

<section class="ribbon">
  <div class="tabs"><button>Modeling</button><button>Freeform</button><button>Selection</button><button>Object Paint</button><button class="active">Populate</button><button class="rmin" aria-label="Minimize ribbon"><svg width="25" height="9"><rect x=".5" y=".5" width="13" height="8" rx="2" fill="#eee" stroke="#999"/><path d="M4 3h6L7 6z" fill="#333"/><path d="M18 3h5l-2.500 3z" fill="#aaa"/></svg></button></div>
  <div class="panelrow"><button>Define Flows</button><button>Define Idle Areas</button><button>Simulate</button><button>Display</button><button>Edit Selected</button></div>
</section>

<div class="snaps"><div class="snapbox">
  <button aria-label="Grid snap"><svg><use href="#s1"/></svg></button><button aria-label="Pivot snap"><svg><use href="#s2"/></svg></button><button aria-label="Vertex snap"><svg><use href="#s3"/></svg></button><button aria-label="Endpoint snap"><svg><use href="#s4"/></svg></button><button aria-label="Midpoint snap"><svg><use href="#s5"/></svg></button><button aria-label="Edge snap"><svg><use href="#s6"/></svg></button><button aria-label="Face snap"><svg><use href="#s7"/></svg></button><i></i><button aria-label="Snap to frozen"><svg><use href="#s8"/></svg></button><button aria-label="Axis constraint"><svg viewBox="0 0 24 24"><text x="2" y="11" class="xy">XY</text><use href="#mag" x="13" y="11" width="10" height="12"/></svg></button>
</div></div>

<main>
  <aside class="left">
    <hr><button aria-label="V-Ray render"><svg><use href="#bpot"/></svg></button><button aria-label="Frame buffer"><svg><use href="#vfb"/></svg></button><button aria-label="Properties"><svg><use href="#list"/></svg></button><button aria-label="Mixer"><svg><use href="#mixer"/></svg></button><hr>
    <button aria-label="Light lister"><svg><use href="#bulb"/></svg></button><hr>
    <button aria-label="Camera"><svg><use href="#cam"/></svg></button><button aria-label="Dome camera"><svg><use href="#domecam"/></svg></button><button aria-label="Stereo camera"><svg><use href="#redcam"/></svg></button><hr>
    <button aria-label="Plane light"><svg><use href="#l1"/></svg></button><button aria-label="Dome light"><svg><use href="#l2"/></svg></button><button aria-label="Sphere light"><svg><use href="#l3"/></svg></button><button aria-label="Mesh light"><svg><use href="#l4"/></svg></button><button aria-label="IES light"><svg><use href="#l5"/></svg></button><button aria-label="Sun"><svg><use href="#l6"/></svg></button><button aria-label="Ambient light"><svg><use href="#l7"/></svg></button><hr>
    <button aria-label="More"><svg><path d="M7 5h3v-2h2v2h3v-2h3v6H7z" fill="#8fb6d0"/></svg></button>
  </aside>

  <section class="center">
    <div class="views">
      <div class="view">
        <div class="vlabel"><span>[ + ]</span><span>[Top ]</span><span>[Wireframe ]</span></div>
        <svg class="scene"><g transform="translate(-42 -166)">
          <rect x="42" y="166" width="3000" height="2000" fill="url(#gridTop)"/>
          <path d="M42 279.500h3000M324.500 166v2000" stroke="#000"/>
          <rect x="300" y="229.500" width="74.500" height="101" rx="1" fill="none" stroke="#3aa7dd" stroke-width="2"/>
          <rect x="300.500" y="230.500" width="72" height="99" fill="none" stroke="#fff"/>
          <path d="M337 247h33v32h-33z" fill="#6b692a"/><path d="M336.500 208v52M336.500 246.500h33v33M357 279.500h52" fill="none" stroke="#ff0"/>
          <path d="m336.500 182 5 25h-10z" fill="#009a00"/><path d="m434 280-25-5v10z" fill="#c80000"/>
          <rect x="328.500" y="271.500" width="15" height="15" fill="none" stroke="#aaa"/>
          <text x="336" y="177" fill="#ff0">y</text><text x="436" y="276" fill="#ff0">x</text>
          <path d="M66.500 344v24.500" stroke="#009a00"/><path d="M67 368.500h25" stroke="#c80000"/>
          <text x="67" y="342" fill="#009a00">y</text><text x="67" y="367" fill="#0000c8">z</text><text x="92" y="367" fill="#c80000">x</text>
          <circle cx="552.500" cy="220.500" r="30" fill="none" stroke="#80858c" stroke-width="6"/>
          <circle cx="552.500" cy="220.500" r="26" fill="none" stroke="#50565d"/>
          <rect x="537" y="205" width="31" height="31" fill="#888" stroke="#9a9a9a"/><rect x="543" y="211" width="19" height="19" fill="#7e8084"/>
          <g class="compass"><text x="548" y="193">N</text><text x="548" y="258">S</text><text x="514" y="225">W</text><text x="581" y="225">E</text></g><text x="545" y="224" class="face">TOP</text>
        </g></svg>
      </div>
      <div class="view">
        <div class="vlabel"><span>[ + ]</span><span>[Front ]</span><span>[Wireframe ]</span></div>
        <svg class="scene"><g transform="translate(-615 -166)">
          <rect x="615" y="166" width="3000" height="2000" fill="url(#gridFront)"/>
          <path d="M615 279.500h3000M897.500 166v2000" stroke="#000"/>
          <path d="m910 182 5 25h-10z" fill="#0000c8"/><path d="M909.500 207v72" stroke="#0000c8"/><text x="908" y="177" fill="#0000c8">z</text>
          <path d="M639.500 344v24.500" stroke="#0000c8"/><path d="M640 368.500h25" stroke="#c80000"/>
          <text x="640" y="342" fill="#0000c8">z</text><text x="640" y="367" fill="#009a00">y</text><text x="665" y="367" fill="#c80000">x</text>
          <path d="M1089 236q36 7 74 1l-14-2" stroke="#999" stroke-width="2" fill="none"/>
          <rect x="1110" y="206" width="31" height="31" fill="#858585" stroke="#9a9a9a"/><rect x="1116" y="212" width="19" height="19" fill="#7a7b7f"/><text x="1114" y="224" class="face">FRONT</text>
        </g></svg>
      </div>
      <div class="view">
        <div class="vlabel"><span>[ + ]</span><span>[Left ]</span><span>[Wireframe ]</span></div>
        <svg class="scene"><g transform="translate(-42 -402)">
          <rect x="42" y="402" width="3000" height="2000" fill="url(#gridLeft)"/>
          <path d="M42 516.500h3000M324.500 402v2000" stroke="#000"/>
          <rect x="274" y="487.500" width="101.500" height="29.500" rx="1" fill="none" stroke="#3aa7dd" stroke-width="2"/>
          <rect x="274.500" y="488.500" width="100" height="28" fill="none" stroke="#fff"/>
          <path d="M291.500 516v-33" stroke="#009a00"/><path d="M291 483.500h33M324.500 440v57" stroke="#0000c8"/><path d="M251 516.500h53" stroke="#ff0"/>
          <path d="m324.500 418 5 26h-10z" fill="#0000c8"/><path d="m224 516.500 28-5v10z" fill="#009a00"/>
          <rect x="316.500" y="508.500" width="15" height="15" fill="none" stroke="#aaa"/>
          <text x="324" y="413" fill="#0000c8">z</text><text x="224" y="513" fill="#ff0">y</text>
          <path d="M66.500 581v24.500" stroke="#0000c8"/><path d="M43 605.500h23" stroke="#009a00"/>
          <text x="67" y="578" fill="#0000c8">z</text><text x="43" y="604" fill="#009a00">y</text><text x="67" y="604" fill="#c80000">x</text>
          <path d="M516 472q36 7 74 1l-14-2" stroke="#999" stroke-width="2" fill="none"/>
          <rect x="537" y="442" width="31" height="31" fill="#858585" stroke="#9a9a9a"/><rect x="543" y="448" width="19" height="19" fill="#7a7b7f"/><text x="544" y="460" class="face">LEFT</text>
        </g></svg>
      </div>
      <div class="view current">
        <div class="vlabel"><span>[ + ]</span><span>[Perspective ]</span><span>[Realistic ]</span></div>
        <svg class="scene"><rect width="100%" height="100%" fill="url(#gpersp)"/><g transform="translate(-615 -402)">
          <path d="m615 528 125-48M615 541l147-58M615 554l160-64M615 570l175-72M615 587l185-77M615 607l195-84M615 627l215-96M646 632l190-92M710 632l110-55M745 632l90-46M780 632l70-36M812 632l60-30M845 632l40-20" stroke="#5c5c5c" fill="none"/>
          <path d="m740 480 160 100M720 489l165 107M700 497l170 115M677 505l186 127M655 514l170 118M630 523l155 109M615 541l120 91M615 560l85 72M615 583l50 49" stroke="#5c5c5c" fill="none"/>
          <path d="m675 629 135-67M740 481l10 6" stroke="#000" stroke-width="1.300"/>
          <path d="m748 478 152-58v126l-20 5z" fill="#b5c355"/><path d="m748 478 132 73 1 53-128-79z" fill="#5f682c"/><path d="m880 551 20-8v53l-19 8z" fill="#95a045"/>
          <path d="m900 420-152 58 5 47 128 79 19-8" fill="none" stroke="#43bbf0" stroke-width="2"/>
          <path d="m843 522 22-11 25 10-26 14z" fill="#c9cf33" stroke="#ff0"/><path d="m820 509 23 13" stroke="#ff0"/>
          <path d="M842.500 522v-28" stroke="#009a00"/><path d="M888.500 522v-28" stroke="#c80000"/><path d="m842 493.500 22 11 25-11M863.500 466v50" fill="none" stroke="#0000c8"/>
          <path d="m863 445 5 25h-10z" fill="#0000c8"/><path d="m803 501 19 3-4 8z" fill="#009a00"/><circle cx="818" cy="508" r="4" fill="#053f05"/>
          <rect x="856.500" y="525.500" width="15" height="15" fill="none" stroke="#aaa"/><text x="802" y="496" fill="#ff0">y</text>
          <path d="M639.500 584v21" stroke="#0000c8"/><path d="m639.500 605-16-8" stroke="#009a00"/><path d="m640 605 17-8" stroke="#c80000"/>
          <text x="640" y="581" fill="#0000c8">z</text><text x="623" y="594" fill="#009a00">y</text><text x="658" y="594" fill="#c80000">x</text>
          <path d="m1101 535 16 8-16 12" fill="none" stroke="#777"/>
          <ellipse cx="1122" cy="470" rx="35" ry="19" fill="#2c2c2c" stroke="#81868c" stroke-width="6"/>
          <path d="m1126 436 20 9-20 10-21-10z" fill="#9a9a9a"/><path d="m1105 445 21 10v24l-20-11z" fill="#7e7e7e"/><path d="m1146 445-20 10v24l19-10z" fill="#898989"/>
          <text class="face" transform="matrix(.9 .4 0 1 1110 462)">LEFT</text><text class="face" transform="matrix(.8 -.4 0 1 1129 469)">FRONT</text><g class="compass"><text x="1149" y="490">S</text></g>
        </g></svg>
      </div>
    </div>
    <div class="slider"><button aria-label="Previous frame">&lt;</button><button class="thumb">0 / 100</button><button aria-label="Next frame">&gt;</button></div>
    <div class="trackbar">
      <button class="mini" aria-label="Open mini curve editor"><svg width="17" height="17"><path d="M.5.500h16v5H.5zM.5 13.500h16v3H.5zM1 4q3-4 6-1t8-1M4.500 12V7m-2 2 2-2 2 2M12.500 7v5m-2-2 2 2 2-2" fill="none" stroke="#ccc"/></svg></button>
      <div class="ruler"><span class="one zero">0</span><span class="one">5</span><span>10</span><span>15</span><span>20</span><span>25</span><span>30</span><span>35</span><span>40</span><span>45</span><span>50</span><span>55</span><span>60</span><span>65</span><span>70</span><span>75</span><span></span><span></span><span></span><span></span><span></span></div>
    </div>
  </section>

  <aside class="command">
    <div class="ctabs"><button aria-label="Create"><svg><use href="#tcreate"/></svg></button><button class="active" aria-label="Modify"><svg><use href="#tmod"/></svg></button><button aria-label="Hierarchy"><svg><use href="#thier"/></svg></button><button aria-label="Motion"><svg><use href="#tmot"/></svg></button><button aria-label="Display"><svg><use href="#tdisp"/></svg></button><button aria-label="Utilities"><svg><use href="#tutil"/></svg></button></div>
    <div class="name"><input type="text" value="Box001" aria-label="Object name"><button aria-label="Object color"></button></div>
    <select class="modlist" aria-label="Modifier list"><option>Modifier List</option></select>
    <div class="stack"><button><svg width="9" height="9"><path d="M0 0h9v9H0z" fill="#000"/><path d="M2 4.500h5M4.500 2v5" stroke="#777"/></svg>Editable Poly</button></div>
    <div class="stacktools">
      <button aria-label="Pin stack"><svg width="17" height="13"><path d="M0 6.500h6" stroke="#fff"/><path d="M6 2h2v3h4V1h3v11h-3V8H8v3H6z" fill="#222" stroke="#ddd"/></svg></button><i></i>
      <button aria-label="Show end result"><svg width="9" height="15"><path d="M0 1h9L7 4v10H2V4z" fill="#ddd" stroke="#111"/></svg></button><i></i>
      <button aria-label="Make unique"><svg width="16" height="15"><path d="m1 1 7 11 7-11M5 4v6l3 4 3-4V4" fill="none" stroke="#ddd" stroke-dasharray="3 1"/></svg></button>
      <button aria-label="Remove modifier"><svg width="12" height="15"><path d="M2 6h8v7q-4 3-8 0zM3 5q3-7 6-1" fill="none" stroke="#eee" stroke-width="1.500"/><path d="M5 8v5m2-5v5" stroke="#aaa"/></svg></button><i></i>
      <button aria-label="Configure"><svg width="16" height="15"><path d="M.5.500h12v12H.5z" fill="#fff" stroke="#111"/><path d="M1 1h12v3H1z" fill="#1515c8"/><path d="M6 6h9v8H6z" fill="#ccc" stroke="#222" stroke-dasharray="2 1"/></svg></button>
    </div>
    <div class="rollwrap"><div class="roll">
      <button class="rhead"><span>-</span>Selection</button>
      <div class="sub">
        <button aria-label="Vertex"><svg width="16" height="16"><path d="M1 9.500h3M2.500 8v3M11 2.500h3M12.500 1v3M7 13.500h3M8.500 12v3" stroke="red"/></svg></button>
        <button aria-label="Edge"><svg width="16" height="16"><path d="M1 9 14 2l-3 11z" fill="none" stroke="red"/></svg></button>
        <button aria-label="Border"><svg width="16" height="16"><path d="M4 1q8-1 8 7t-5 7q-5 0-4-5 3-2 0-5-1-3 1-4z" fill="none" stroke="red"/></svg></button>
        <button aria-label="Polygon"><svg width="16" height="16"><path d="M2.500 2.500h11v11h-11z" fill="red" stroke="#000"/></svg></button>
        <button aria-label="Element"><svg width="16" height="16"><path d="M1.500 6.500h8v8h-8zM1.500 6.500l4-4h8l-4 4z" fill="red" stroke="#000"/><path d="m9.500 6.500 4-4v7l-4 5z" fill="#80009a" stroke="#000"/></svg></button>
      </div>
      <label class="ck"><input type="checkbox">By Vertex</label>
      <label class="ck"><input type="checkbox">Ignore Backfacing</label>
      <div class="ang"><label class="ck"><input type="checkbox">By Angle:</label><input type="text" value="45.0" aria-label="Angle"><button class="sp" aria-label="Step"></button></div>
      <div class="two"><button>Shrink</button><button>Grow</button></div>
      <div class="two"><div><button>Ring</button><button class="sp" aria-label="Ring step"></button></div><div><button>Loop</button><button class="sp" aria-label="Loop step"></button></div></div>
      <fieldset><legend>Preview Selection</legend><label class="lit"><input type="radio" name="pv" checked>Off</label><label><input type="radio" name="pv">SubObj</label><label><input type="radio" name="pv">Multi</label></fieldset>
      <p>Object Selected</p>
    </div><div class="rscroll"></div></div>
  </aside>
</main>

<footer class="status">
  <div class="listener"><div class="pink"></div><div class="white">Welcome to MA</div></div>
  <div class="prompt">
    <div class="line"><div class="box grow">1 Object Selected</div>
      <div class="sicons"><svg width="12" height="16"><ellipse cx="6" cy="5" rx="5" ry="5" fill="#e88a94"/><path d="M3 9h6l-2 6H5z" fill="#b5414d"/><circle cx="5" cy="3" r="1.500" fill="#fff"/></svg><svg width="12" height="14"><path d="M3 6V3q3-4 6 0v3" fill="none" stroke="#eee" stroke-width="1.500"/><path d="M1 6h10v7H1z" fill="#ead9b4" stroke="#222"/></svg><svg width="15" height="15"><path d="M0 0h15v15H0z" fill="#e4e7ea"/><path d="M1 7.500h13M7.500 1v13" stroke="#333"/><circle cx="7.500" cy="7.500" r="3.500" fill="#fff" stroke="#333"/></svg></div>
      <label>X:<input type="text" value="0.22m"></label><button class="sp" aria-label="X step"></button>
      <label>Y:<input type="text" value="0.001m"></label><button class="sp" aria-label="Y step"></button>
      <label>Z:<input type="text" value="0.0m"></label><button class="sp" aria-label="Z step"></button>
      <div class="box rest">Grid = 0.254m</div></div>
    <div class="line"><div class="box grow">Click and drag to select and move objects</div><button class="adapt" aria-label="Adaptive degradation"><svg width="16" height="16"><use href="#cube"/></svg></button><div class="box rest">Add Time Tag</div></div>
  </div>
  <div class="keys"><select aria-label="Key target"><option>Selected</option></select><button>Key Filters...</button></div>
  <div class="play">
    <div class="line"><button aria-label="Start"><svg width="16" height="11"><path d="M1.500 0v11M8 1v9L3 5.500zM15 1v9l-5-4.500z" fill="#888" stroke="#eee"/></svg></button><button aria-label="Previous"><svg width="16" height="11"><path d="M7 1v9L1 5.500zM9.500 1v9h1V1zM13.500 1v9h1V1z" fill="#888" stroke="#eee"/></svg></button><button aria-label="Play"><svg width="16" height="15"><path d="m3 3 9 4.500L3 12z" fill="#888" stroke="#eee"/><path d="M16 11v4h-4z" fill="#fff"/></svg></button><button aria-label="Next"><svg width="16" height="11"><path d="M9 1v9l6-4.500zM1.500 1v9h1V1zM5.500 1v9h1V1z" fill="#888" stroke="#eee"/></svg></button><button aria-label="End"><svg width="16" height="11"><path d="M14.500 0v11M8 1v9l5-4.500zM1 1v9l5-4.500z" fill="#888" stroke="#eee"/></svg></button></div>
    <div class="line second"><button aria-label="Key mode"><svg width="17" height="11"><path d="M1.500 0v11M15.500 0v11M7 2v7L3 5.500zM10 2v7l4-3.500z" fill="#888" stroke="#eee"/></svg></button><input type="text" value="0" aria-label="Current frame"><button class="sp" aria-label="Frame step"></button><button class="timeconf" aria-label="Time configuration"><svg><use href="#nav5"/></svg></button></div>
  </div>
  <div class="nav">
    <button aria-label="Zoom"><svg><use href="#nav1"/></svg></button><button aria-label="Zoom all"><svg><use href="#nav2"/></svg></button><button aria-label="Zoom extents"><svg><use href="#nav3"/></svg></button><button aria-label="Zoom extents all"><svg><use href="#nav4"/></svg></button>
    <button aria-label="Field of view"><svg><use href="#nav6"/></svg></button><button aria-label="Pan"><svg><use href="#hand"/></svg></button><button aria-label="Orbit"><svg><use href="#orbit"/></svg></button><button aria-label="Maximize viewport"><svg><use href="#maxim"/></svg></button>
  </div>
</footer>

<div class="taskbar">
  <button class="start" aria-label="Start"><svg width="17" height="16"><path d="m0 2 7-1v7H0zM8 1l9-1v8H8zM0 9h7v6l-7-1zM8 9h9v7l-9-1z" fill="#fff"/></svg></button>
  <label class="search"><svg width="22" height="22"><circle cx="11" cy="11" r="9" fill="none" stroke="#fff" stroke-width="3"/></svg><input type="text" placeholder="Type here to search" aria-label="Type here to search"><svg width="12" height="17"><path d="M3.500.500h5v10h-5zM.5 8v5h11V8M6 13v3.500M3 16.500h6" fill="none" stroke="#aaa"/></svg></label>
  <button aria-label="Task view"><svg width="21" height="15"><path d="M4.500.500h11v13h-11zM3 2.500H.500v9H3M17 2.500h2.500v9H17" fill="none" stroke="#fff"/></svg></button>
  <button aria-label="Store"><svg width="24" height="23"><path d="M0 6h24v15q0 2-2 2H2q-2 0-2-2z" fill="#fff"/><path d="M8 6q0-5 4-5t4 5" fill="none" stroke="#fff" stroke-width="1.500"/><path d="M6 9h5v5H6z" fill="#f25022"/><path d="M12 9h5v5h-5z" fill="#7fba00"/><path d="M6 15h5v5H6z" fill="#00a4ef"/><path d="M12 15h5v5h-5z" fill="#ffb900"/></svg></button>
  <button aria-label="File Explorer"><svg width="22" height="19"><path d="M0 1h9l2 2h11v15H0z" fill="#fbe08b"/><path d="M0 1h9v2H0z" fill="#f7c531"/><path d="M4 10h14v8h-4v-4H8v4H4z" fill="#35a3e0"/></svg></button>
  <button aria-label="Chrome"><svg width="23" height="23" viewBox="0 0 22 22"><circle cx="11" cy="11" r="11" fill="#ffcd41"/><path d="M1.500 5.500A11 11 0 0 1 20.500 5.500H11l-5 8z" fill="#db4437"/><path d="M1.500 5.500 6 13.500l5 3-2 5.300A11 11 0 0 1 1.500 5.500z" fill="#1ba15f"/><circle cx="11" cy="11" r="5" fill="#fff"/><circle cx="11" cy="11" r="4" fill="#4285f4"/></svg></button>
  <button aria-label="Mail"><svg width="24" height="20"><path d="m0 7 12-7 12 7v13H0z" fill="#fff"/><path d="M1 7h22l-9 4 5 5-9-4z" fill="#1c1c15"/></svg></button>
  <button aria-label="Photoshop"><svg width="22" height="22"><path d="M1 1h20v20H1z" fill="#0a1a2e" stroke="#3fc1f0" stroke-width="2"/><text x="4" y="15" class="ps">Ps</text></svg></button>
  <button class="cur" aria-label="3ds Max"><svg width="24" height="24"><path d="M0 0h24v24H0z" fill="url(#gteal)"/><use href="#maxlogo" x="5" y="2" width="14" height="17"/><text x="11" y="23" class="mx">max</text></svg></button>
  <div class="tray">
    <svg width="12" height="8"><path d="m.5 7 5.500-5.500L11.500 7" fill="none" stroke="#fff" stroke-width="1.200"/></svg>
    <svg width="15" height="10"><path d="M.5.500h12v9H.5z" fill="none" stroke="#fff"/><path d="M3 3h7v4H3zM13 3h2v4h-2z" fill="#fff"/></svg>
    <svg width="14" height="14"><path d="M1 12Q2 2 13 2M4 12q1-7 9-7M7 12q1-4 6-4" fill="none" stroke="#ccc" stroke-width="1.200"/><circle cx="11" cy="11.500" r="1.500" fill="#fff"/></svg>
    <svg width="16" height="14"><path d="M.5 4.500H3l3-3v11l-3-3H.500zM8 5q2 2 0 4M10.500 3q4 4 0 8M13 1q5 6 0 12" fill="none" stroke="#fff"/></svg>
    <svg width="23" height="13"><path d="M.5.500h22v12H.500z" fill="none" stroke="#fff"/><path d="M3 3.500h17m-17 3h17" stroke="#fff" stroke-dasharray="2 1"/><path d="M6 9.500h11" stroke="#fff"/></svg>
    <span class="lang">ENG</span>
    <span class="clock">11:00 PM<br>12/9/2017</span>
    <svg class="note" width="25" height="25"><path d="M1 1h16v13h-9l-3 3v-3H1z" fill="#fff"/><path d="M4 4.500h10m-10 3h10m-10 3h7" stroke="#222"/><circle cx="16" cy="16" r="8" fill="#3d3d38" stroke="#999"/><text x="13" y="20" class="nt">1</text></svg>
  </div>
</div>
</div>

<div class="quad q1" role="menu">
  <div class="g top"><button>NURMS Toggle</button><button>Ignore Backfacing</button></div>
  <div class="g"><button>Collapse</button><button class="optl">Attach</button></div>
  <div class="g"><button>Cut</button><button>Quickslice</button></div>
  <div class="g"><button>Repeat</button></div>
  <div class="g thick"><button>Element</button><button>Polygon</button><button>Border</button><button>Edge</button><button>Vertex</button><button class="tick">Top-level<svg width="9" height="9"><path d="m0 5 3 3 5-7" fill="none" stroke="#000" stroke-width="2"/></svg></button></div>
  <div class="h">tools 1</div><div class="h">tools 2</div>
  <div class="g"><button>Create</button></div><div class="g end"></div>
</div>
<div class="quad q2" role="menu">
  <div class="g"><button class="more">Viewport Lighting and Shadows</button></div>
  <div class="g"><button>Isolate Selection</button><button class="off">End Isolate</button></div>
  <div class="g"><button>Unfreeze All</button><button>Freeze Selection</button></div>
  <div class="g"><button>Unhide by Name</button><button>Unhide All</button><button>Hide Unselected</button><button>Hide Selection</button></div>
  <div class="g"><button class="more">State Sets</button><button>Manage State Sets...</button></div>
  <div class="h">display</div><div class="h">transform</div>
  <div class="g"><button class="opt">Move</button><button class="opt">Rotate</button><button class="opt">Scale</button><button>Placement</button><button>Select</button><button>Select <u>S</u>imilar</button></div>
  <div class="g"><button><u>C</u>lone</button></div>
  <div class="g"><button>Object <u>P</u>roperties...</button></div>
  <div class="g"><button>Curve Editor...</button><button>Dope Sheet...</button><button>Wire Parameters...</button></div>
  <div class="g"><button class="more sel">Convert To:</button><button>V-Ray properties</button><button>V-Ray VFB</button><button>V-Ray scene converter</button><button>V-Ray Bitmap to VRayHDRI converter</button><button>V-Ray mesh export</button><button>.vrscene exporter</button></div>
</div>
<div class="quad q3" role="menu"><div class="g"><button>Convert to Editable Mesh</button><button class="sel">Convert to Editable Poly</button><button>Convert to Deformable gPoly</button><button>Convert to Editable Patch</button></div></div>
</body>
</html>
```
FILE: styles.css
```css
*, *::before, *::after { box-sizing: border-box; }
body { margin: 0; background: #444; color: #ddd; font: 11px/14px "Open Sans", "Noto Sans", sans-serif; overflow: hidden; }
button, input, select { font: inherit; color: inherit; margin: 0; padding: 0; border: 0; background: none; border-radius: 0; outline: 0; }
button { display: flex; align-items: center; justify-content: center; white-space: nowrap; }
input { min-width: 0; }
svg { display: block; flex: none; }
select { appearance: none; background: #e1e1e1 url("data:image/svg+xml,%3Csvg xmlns='http://www.w3.org/2000/svg' width='9' height='6'%3E%3Cpath d='M.5.5l4 4 4-4' fill='none' stroke='%23555'/%3E%3C/svg%3E") no-repeat right 4px center; color: #111; }
.sprite { position: absolute; width: 0; height: 0; }
.app { display: flex; flex-direction: column; height: 100vh; min-height: 760px; position: relative; }

/* title bar */
.titlebar { display: flex; flex: none; height: 24px; background: #fff; color: #111; font-size: 12px; }
.qat, .info { display: flex; flex: none; align-items: center; background: linear-gradient(#b0b0b0, #8a8a8a); border-top: 1px solid #555; }
.qat { padding-left: 46px; width: 361px; }
.ib { width: 24px; height: 22px; }
.car { width: 12px; height: 20px; }
.car::after { content: ""; border: 3px solid transparent; border-top: 4px solid #444; border-bottom: 0; }
.car.slim { width: 9px; }
.car.wide { flex: 1; }
.car.wide::after { border-width: 5px 4px 0; }
.workspace { width: 130px; height: 20px; padding-left: 4px; border: 1px solid #666; background-color: #c6c6c6; background-size: 7px 5px; }
h1 { flex: 1; display: flex; justify-content: center; gap: 13px; margin: 0; font-size: 12px; font-weight: 400; line-height: 24px; white-space: nowrap; }
.info { width: 458px; padding-right: 1px; }
.expand { width: 14px; height: 22px; flex: none; }
.info input { width: 180px; flex: none; height: 22px; background: #fff; border: 1px solid #000; padding-left: 3px; font-style: italic; appearance: none; }
.info input::placeholder { color: #777; opacity: 1; }
.user { width: 86px; padding-left: 1px; }
.help { width: 17px; height: 17px; border: 1px solid #234; border-radius: 50%; background: #f4f6fa; color: #1f4fa8; font-weight: 700; margin: 0 4px 0 15px; }
.win { display: flex; flex: none; width: 163px; padding-left: 24px; }
.win button { width: 46px; height: 23px; }
.appbtn { position: absolute; left: 0; top: 0; z-index: 2; width: 41px; height: 41px; border: 1px solid #222; background: linear-gradient(#ccc, #8d8d8d); display: grid; grid-template-columns: 20px 8px; justify-content: center; align-content: start; padding-top: 3px; column-gap: 3px; }
.appbtn svg { grid-row: 1; }
.appbtn .tri { border: 4px solid transparent; border-top: 5px solid #222; border-bottom: 0; align-self: center; }
.appbtn span { font: 700 9px/9px "Liberation Sans", sans-serif; color: #111; text-align: left; grid-column: 1 / 3; padding-left: 4px; }

.menubar { display: flex; flex: none; gap: 21px; height: 22px; padding-left: 55px; background: linear-gradient(#a4a4a4, #4f4f4f); border-top: 1px solid #333; font-size: 12px; color: #fff; }

/* main toolbar */
.toolbar { display: flex; flex: none; align-items: center; gap: 2px; height: 38px; padding: 0 4px 0 9px; border-bottom: 1px solid #111; border-right: 1px solid #111; background: linear-gradient(90deg, transparent 3px, #111 3px, #111 4px, transparent 4px, transparent 6px, #111 6px, #111 7px, transparent 7px) 0 3px / 100% 32px no-repeat #444; overflow: hidden; }
.toolbar button { width: 30px; height: 30px; flex: none; }
.toolbar svg { width: 24px; height: 24px; overflow: visible; }
.toolbar svg.big { width: 26px; height: 26px; margin-top: 2px; }
.toolbar svg.arrow { width: 22px; height: 18px; }
.toolbar i, .snapbox i, .stacktools i { width: 4px; height: 16px; flex: none; background: linear-gradient(#111, #111) center / 1px 100% no-repeat; }
.toolbar .on { background: #3c80dc; border: 1px solid #111; }
.toolbar select { flex: none; height: 20px; margin-bottom: 9px; padding-left: 3px; border: 1px solid #111; }
.filter { width: 67px; }
.coord { width: 67px; }
.toolbar .named { width: 118px; padding-left: 1px; border: 2px solid #111; background-color: #fff; box-shadow: inset 98px 0 #555; }
.ict { font: 18px "Liberation Sans", sans-serif; fill: #ddd; }
.abc { font: 700 8px "Liberation Sans", sans-serif; fill: #fff; }
.xy { font: 14px "Liberation Sans", sans-serif; fill: #ddd; }

/* ribbon */
.ribbon { flex: none; height: 41px; font-size: 12px; background: #3b3b3b; border-left: 10px solid #444; }
.tabs { display: flex; height: 21px; background: #535353; border: 1px solid #2d2d2d; color: #a5a5a5; padding-left: 24px; }
.tabs button { margin-right: 30px; }
.tabs button:nth-child(2) { margin-right: 42px; }
.tabs button:nth-child(3) { margin-right: 42px; }
.tabs button:nth-child(4) { margin-right: 16px; }
.tabs .active { width: 77px; padding-left: 12px; background: #6a6a6a; border: 1px solid #2d2d2d; color: #ddd; margin-right: 23px; }
.panelrow { display: flex; gap: 1px; height: 20px; padding: 0 1px 1px; background: linear-gradient(#474747, #373737); }
.panelrow button { height: 18px; padding: 0 2px; border: 1px solid #5b5b5b; background: #444; color: #eee; }

.snaps { flex: none; height: 39px; display: flex; }
.snapbox { display: flex; align-items: center; gap: 2px; padding-left: 9px; width: 306px; border: 1px solid #111; border-width: 0 1px 1px 0; background: linear-gradient(90deg, transparent 3px, #111 3px, #111 4px, transparent 4px, transparent 6px, #111 6px, #111 7px, transparent 7px) 0 3px / 100% 32px no-repeat; }
.snapbox button { width: 30px; height: 30px; }
.snapbox svg { width: 24px; height: 24px; overflow: visible; }

/* workspace */
main { flex: 1; display: flex; min-height: 0; }
.left { width: 40px; flex: none; overflow: hidden; padding: 4px 2px 0 0; border-right: 1px solid #333; background: linear-gradient(#111, #111) 38px 0 / 1px 100% no-repeat; }
.left button { width: 38px; height: 31px; }
.left svg { width: 23px; height: 23px; }
.left hr { height: 8px; margin: 0 2px 0 7px; border: 0; border-top: 1px solid #111; }
.left hr:first-child { height: 4px; }
.center { flex: 1; display: flex; flex-direction: column; min-width: 0; }
.views { flex: 1; display: grid; grid-template: 1fr 1fr / 1fr 1fr; gap: 4px; min-height: 0; }
.view { position: relative; border: 2px solid #2f2f2f; background: #383838; overflow: hidden; }
.view.current { border-color: #7a6526; }
.scene { width: 100%; height: 100%; font: 10px "Open Sans", sans-serif; }
.scene .compass text { font: 700 12px "Liberation Sans", sans-serif; fill: #a5a7aa; }
.scene .face { font: 700 7px "Liberation Sans", sans-serif; fill: #55575a; }
.vlabel { position: absolute; left: 3px; top: 4px; display: flex; gap: 2px; font-size: 11px; color: #d5d5d5; white-space: nowrap; }
.slider { display: flex; height: 20px; padding-top: 1px; flex: none; }
.slider button { width: 16px; border-right: 1px solid #111; border-bottom: 1px solid #111; border-top: 1px solid #555; }
.slider .thumb { width: 125px; border-right-width: 2px; border-bottom-width: 2px; }
.trackbar { display: flex; height: 26px; flex: none; border-top: 1px solid #111; }
.mini { width: 50px; flex: none; padding-right: 6px; }
.ruler { flex: 1; display: flex; padding-left: 5px; background: #2b2b2b; }
.ruler span { flex: 1; height: 25px; padding-top: 11px; color: #ccc; text-indent: -5px; background: linear-gradient(90deg, #777 1px, transparent 1px) 0 0 / 20% 12px repeat-x; }
.ruler .one { text-indent: -2px; }
.ruler .zero { color: #fffba0; position: relative; z-index: 0; }
.ruler .zero::before { content: ""; position: absolute; z-index: -1; left: -3px; top: 0; width: 8px; height: 25px; background: #8c8420; }

/* command panel */
.command { width: 184px; flex: none; padding: 2px 6px 0 2px; border-bottom: 1px solid #111; display: flex; flex-direction: column; }
.ctabs { display: flex; height: 26px; border-bottom: 1px solid #111; flex: none; }
.ctabs button { width: 29px; border: 1px solid #111; border-radius: 4px 4px 0 0; border-bottom: 0; background: #3d3d3d; }
.ctabs .active { background: #484848; }
.ctabs svg { width: 19px; height: 19px; }
.name { display: flex; gap: 4px; margin: 5px 0 0 9px; height: 20px; }
.name input { flex: 1; background: #555; border: 1px solid; border-color: #111 #555 #555 #111; padding-left: 2px; }
.name button { width: 17px; background: #c8d760; border: 1px solid #333; }
.modlist { margin: 5px 2px 0 9px; height: 23px; border: 1px solid #111; padding-left: 2px; flex: none; color: #ddd; background-color: #fff; box-shadow: inset 146px 0 #555; background-position: right 4px center; }
.stack { margin: 5px 4px 0 10px; height: 126px; flex: none; border: 1px solid #fff; background: #555; }
.stack button { width: 100%; height: 16px; justify-content: flex-start; gap: 7px; padding-left: 6px; background: #444; border-bottom: 1px solid #777; }
.stacktools { display: flex; height: 30px; padding: 0 14px 0 12px; align-items: center; justify-content: space-between; flex: none; }
.rollwrap { display: flex; margin: 10px 0 0 2px; border-top: 2px solid #111; padding-top: 8px; flex: none; height: 255px; }
.roll { flex: 1; min-width: 0; border: 1px solid #222; padding: 3px 3px 0; height: 239px; color: #111; }
.rscroll { width: 4px; margin-left: 1px; background: linear-gradient(#1a1a1a 51px, #d0d0d0 51px); }
.rhead { width: 100%; height: 17px; position: relative; border: 1px solid #6a6a6a; background: #505050; color: #fff; }
.rhead span { position: absolute; left: 3px; }
.sub { display: flex; gap: 8px; padding: 6px 0 0 19px; margin-bottom: 8px; }
.ck { display: flex; align-items: center; gap: 5px; height: 19px; padding-left: 6px; white-space: nowrap; }
input[type=checkbox] { appearance: none; width: 13px; height: 13px; flex: none; border: 1px solid; border-color: #111 #666 #666 #111; }
.ang { display: flex; align-items: center; gap: 2px; height: 20px; margin-bottom: 1px; }
.ang > input { flex: 1; width: 0; height: 16px; background: #555; border: 1px solid; border-color: #111 #666 #666 #111; padding-left: 2px; }
.sp { width: 12px; height: 17px; flex: none; display: flex; flex-direction: column; gap: 3px; border: 1px solid #222; background: #4a4a4a; }
.sp::before, .sp::after { content: ""; border: 3px solid transparent; }
.sp::before { border-bottom: 4px solid #ccc; border-top: 0; }
.sp::after { border-top: 4px solid #ccc; border-bottom: 0; }
.ang .sp { margin-right: 3px; }
.two { display: grid; grid-template-columns: 1fr 1fr; gap: 6px; padding: 0 1px 0 6px; margin-bottom: 4px; }
.two > div { display: flex; gap: 3px; }
.two button:not(.sp) { flex: 1; height: 18px; border: 1px solid; border-color: #555 #111 #111 #555; }
fieldset { display: flex; justify-content: space-between; margin: 0 0 0 -2px; padding: 0 4px 5px 2px; border: 1px solid #111; min-width: 0; height: 38px; align-items: center; }
legend { color: #ddd; padding: 0 3px; margin-left: 3px; }
fieldset label { display: flex; gap: 6px; align-items: center; }
.lit { color: #ddd; }
input[type=radio] { appearance: none; width: 10px; height: 10px; border-radius: 50%; border: 2px solid #161616; background: #555; }
input[type=radio]:checked { background: #eee; }
.roll p { margin: 8px 9px 0; text-align: right; color: #ddd; }

/* status */
.status { flex: none; display: flex; height: 50px; padding-top: 3px; }
.listener { width: 100px; padding-left: 1px; flex: none; display: flex; flex-direction: column; gap: 1px; }
.listener div { height: 22px; border: 1px solid; border-color: #777 #fff #fff #777; overflow: hidden; white-space: nowrap; }
.pink { background: #dcc3c4; }
.white { background: #fff; color: #000; font: 12px/19px "Liberation Mono", monospace; padding: 0 5px; }
.prompt { flex: 1; margin-left: 4px; padding: 1px 0 0 2px; border-left: 1px solid #111; min-width: 0; display: flex; flex-direction: column; gap: 4px; overflow: hidden; }
.line { display: flex; align-items: center; gap: 2px; height: 21px; }
.box { height: 21px; padding-left: 5px; line-height: 20px; white-space: nowrap; border: 1px solid; border-color: #161616 #555 #444 #161616; overflow: hidden; }
.grow { flex: 1; }
.rest { width: 223px; }
.sicons { display: flex; gap: 14px; align-items: center; padding: 0 8px 0 6px; }
.line label { display: flex; gap: 1px; align-items: center; }
.line label input { width: 56px; height: 21px; }
.line input { background: #555; border: 2px solid; border-color: #161616 #555 #555 #161616; padding-left: 1px; }
.line label ~ .sp { height: 16px; }
.adapt { width: 22px; height: 21px; background: #3c80dc; border: 1px solid #111; }
.keys { width: 93px; flex: none; display: flex; flex-direction: column; gap: 3px; }
.keys select { height: 20px; }
.keys button { height: 20px; border: 1px solid #161616; }
.play { width: 128px; flex: none; padding-left: 8px; }
.play .line { gap: 8px; }
.play .second { gap: 1px; margin-top: 2px; }
.second input { flex: 1; height: 20px; }
.nav { flex: none; display: grid; grid-template-columns: repeat(4, 23px); width: 99px; grid-auto-rows: 22px; padding-left: 3px; }
.nav svg, .timeconf svg { width: 16px; height: 16px; }
.timeconf { width: 20px; height: 18px; margin-left: 2px; }

/* taskbar */
.taskbar { flex: none; display: flex; height: 40px; background: #1c1c15; }
.taskbar button { width: 49px; height: 40px; flex: none; }
.taskbar .start { width: 48px; }
.search { display: flex; align-items: center; gap: 9px; width: 344px; padding: 0 14px 0 9px; background: #333; }
.search input { flex: 1; font-size: 14px; }
.search input::placeholder { color: #aaa; opacity: 1; }
.taskbar .cur { width: 48px; margin-left: 2px; background: #4a4a44; border-bottom: 2px solid #76b9ed; }
.ps { font: 700 12px "Liberation Sans", sans-serif; fill: #3fc1f0; }
.mx { font: 700 6px "Liberation Sans", sans-serif; fill: #345; }
.tray { flex: 1; display: flex; align-items: center; justify-content: flex-end; gap: 9px; padding-right: 4px; margin-right: 5px; border-right: 1px solid #555; color: #fff; font-size: 12px; line-height: 18px; }
.clock { width: 62px; text-align: center; }
.note { margin: 0 8px 0 4px; }
.nt { font: 12px "Liberation Sans", sans-serif; fill: #fff; }

/* quad menus */
.quad { position: absolute; z-index: 5; border: 1px solid #000; border-top: 0; background: #444; color: #9c9c9c; font: 11px/16px "Liberation Sans", sans-serif; }
.q1 { left: 680px; top: 190px; width: 211px; }
.q2 { left: 890px; top: 226px; width: 211px; }
.q3 { left: 1100px; top: 615px; width: 167px; }
.g { border-top: 1px solid #000; }
.g.top { padding-top: 3px; }
.g.thick { border-top-width: 2px; }
.g.end { height: 3px; }
.quad button { width: 100%; height: 16px; display: block; text-align: left; padding: 0 14px; position: relative; }
.q1 button { text-align: right; }
.h { height: 14px; font-size: 10px; line-height: 13px; border-top: 1px solid #000; padding: 0 2px 0 1px; font-weight: 700; background: #3c3c3c linear-gradient(#3c80dc, #3c80dc) right 0 / 13px 100% no-repeat; }
.q2 .h { text-align: right; background-position: left 0; }
.quad .sel { background: #3c80dc; color: #fff; }
.quad .off { color: #222; }
.more::after { content: ""; position: absolute; right: 7px; top: 3px; border: 5px solid transparent; border-left: 5px solid #000; border-right: 0; }
.opt::after, .optl::after { content: ""; position: absolute; right: 1px; top: 4px; width: 9px; height: 9px; border: 1px solid #000; border-top-width: 3px; }
.optl::after { right: auto; left: 2px; }
.tick svg { position: absolute; right: 0; top: 4px; }
```
